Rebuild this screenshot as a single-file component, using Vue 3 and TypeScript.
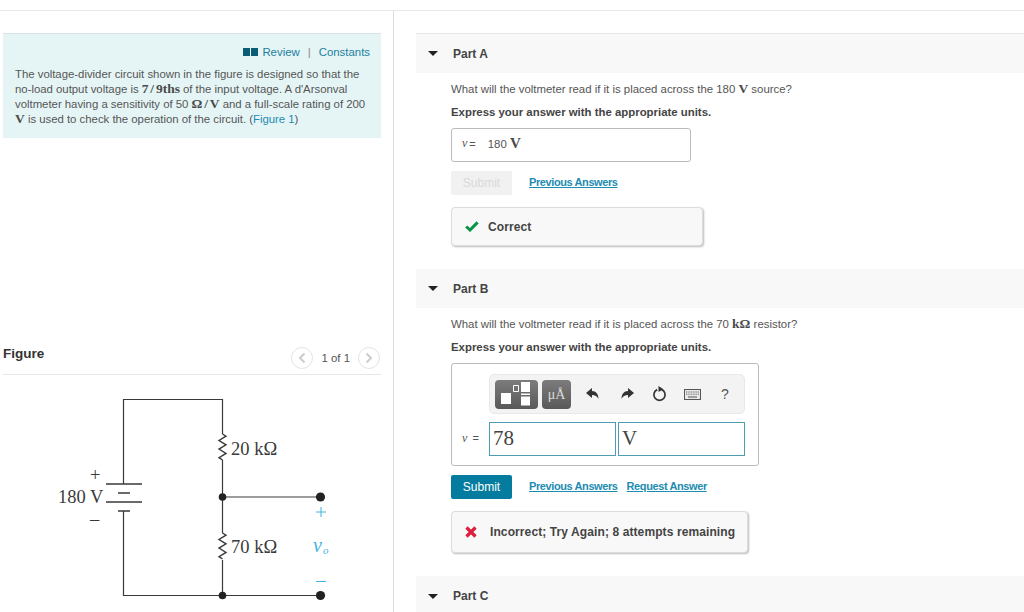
<template>
  <div class="page">
    <aside class="left">
      <section class="intro">
        <div class="intro-links">
          <svg class="book" width="15" height="8" viewBox="0 0 15 8"><path d="M0 0h7v8H0zM8 0h7v8H8z" fill="#0c5c75" /></svg>
          <a>Review</a>
          <span class="sep">|</span>
          <a>Constants</a>
        </div>
        <p>
          The voltage-divider circuit shown in the figure is designed so that the
          no-load output voltage is <span class="math">7 / 9ths</span> of the input voltage. A d'Arsonval
          voltmeter having a sensitivity of 50 <span class="math">Ω / V</span> and a full-scale rating of 200
          <span class="math">V</span> is used to check the operation of the circuit. <span class="fig-link">(<a>Figure 1</a>)</span>
        </p>
      </section>

      <div class="figure-head">
        <strong>Figure</strong>
        <div class="pager">
          <span class="round"><svg width="8" height="12" viewBox="0 0 8 12"><path d="M6.5 1.5 2 6l4.5 4.5" fill="none" stroke="#ccc" stroke-width="2" /></svg></span>
          <span class="count">1 of 1</span>
          <span class="round"><svg width="8" height="12" viewBox="0 0 8 12"><path d="M1.5 1.5 6 6l-4.5 4.5" fill="none" stroke="#ccc" stroke-width="2" /></svg></span>
        </div>
      </div>

      <svg class="circuit" width="381" height="237" viewBox="0 375 381 237">
        <g fill="none" stroke="#3a3a3a" stroke-width="1.2">
          <path d="M123.5 484V399.5H222.5V434" />
          <path :d="resistor(434)" stroke-width="1.4" />
          <path d="M222.5 460V533" />
          <path :d="resistor(533)" stroke-width="1.4" />
          <path d="M222.5 560V595.5H123.5V511" />
          <path d="M222.5 497H320.5M222.5 595.5H320.5" />
          <path d="M106 484H142M118 493H130M106 502H142M118 511H130" stroke-width="1.6" />
        </g>
        <g fill="#222">
          <circle cx="222.5" cy="497" r="3.8" />
          <circle cx="320.5" cy="497" r="4.6" />
          <circle cx="222.5" cy="595.5" r="3.8" />
          <circle cx="320.5" cy="595.5" r="4.6" />
        </g>
        <g class="label">
          <text x="90" y="481">+</text>
          <text x="58" y="503">180 V</text>
          <text x="90" y="525">–</text>
          <text x="231" y="455">20 kΩ</text>
          <text x="231" y="553">70 kΩ</text>
        </g>
        <g class="blue">
          <path d="M316 512H326M321 507V517M316 581.5H326" fill="none" stroke="#3fb4e0" stroke-width="1" />
          <text x="313" y="552" class="v">v</text>
          <text x="323" y="554" class="o">o</text>
        </g>
      </svg>
    </aside>

    <main class="right">
      <section class="part part-a">
        <header class="part-head"><i class="caret"></i>Part A</header>
        <div class="part-body">
          <p class="q">What will the voltmeter read if it is placed across the 180 <span class="math">V</span> source?</p>
          <p class="hint">Express your answer with the appropriate units.</p>
          <div class="answer-done"><span class="var">v</span> =<span class="val">180 <span class="math">V</span></span></div>
          <div class="actions">
            <button class="btn off">Submit</button>
            <a class="link">Previous Answers</a>
          </div>
          <div class="feedback ok">
            <svg width="14" height="11" viewBox="0 0 14 11"><path d="M1.2 5.5 5 9l7.6-7.6" fill="none" stroke="#0a9345" stroke-width="3" /></svg>
            <span>Correct</span>
          </div>
        </div>
      </section>

      <section class="part part-b">
        <header class="part-head"><i class="caret"></i>Part B</header>
        <div class="part-body">
          <p class="q">What will the voltmeter read if it is placed across the 70 <span class="math">kΩ</span> resistor?</p>
          <p class="hint">Express your answer with the appropriate units.</p>
          <div class="editor">
            <div class="toolbar">
              <span class="tool wide">
                <svg width="32" height="24" viewBox="0 0 32 24">
                  <path d="M0 11h10v11H0z" fill="#fff" />
                  <path d="M12.5 3.5h5v6h-5z" fill="none" stroke="#fff" />
                  <path d="M20 0h9v10h-9zM20 11.5h9v1.5h-9zM20 14.5h9v9h-9z" fill="#fff" />
                </svg>
              </span>
              <span class="tool unit">μÅ</span>
              <svg class="ico undo" width="14" height="12" viewBox="0 0 14 12"><path d="M6 0 0 5l6 5V7c3 0 5 1 6.5 4C12.5 6 10 3 6 3z" fill="#333" /></svg>
              <svg class="ico redo" width="14" height="12" viewBox="0 0 14 12"><path d="M8 0l6 5-6 5V7c-3 0-5 1-6.5 4C1.5 6 4 3 8 3z" fill="#333" /></svg>
              <svg class="ico reset" width="15" height="16" viewBox="0 0 15 16"><path d="M9.8 3.6a5.6 5.6 0 1 1-4.6 0" fill="none" stroke="#333" stroke-width="1.7" /><path d="M6.5 0l5 3.3-5 2.7z" fill="#333" /></svg>
              <svg class="ico keys" width="17" height="11" viewBox="0 0 17 11"><rect x=".5" y=".5" width="16" height="10" fill="#e8e8e8" stroke="#555" /><path d="M2 3h13M2 5.2h13" stroke="#666" stroke-dasharray="1 .7" /><path d="M4 8h9" stroke="#555" /></svg>
              <span class="ico help">?</span>
            </div>
            <div class="entry">
              <span class="entry-label"><span class="var">v</span> =</span>
              <div class="field">78</div>
              <div class="field">V</div>
            </div>
          </div>
          <div class="actions">
            <button class="btn on">Submit</button>
            <a class="link">Previous Answers</a>
            <a class="link second">Request Answer</a>
          </div>
          <div class="feedback bad">
            <svg width="12" height="12" viewBox="0 0 12 12"><path d="M1.5 1.5l9 9M10.5 1.5l-9 9" stroke="#dc1f3c" stroke-width="3.2" /></svg>
            <span>Incorrect; Try Again; 8 attempts remaining</span>
          </div>
        </div>
      </section>

      <section class="part part-c">
        <header class="part-head"><i class="caret"></i>Part C</header>
      </section>
    </main>
  </div>
</template>

<script setup lang="ts">
// zigzag of a vertical resistor, 26px tall, starting at y
const resistor = (y: number): string => {
  const pts: string[] = [`M222.5 ${y}`]
  for (let i = 0; i < 6; i++) {
    const x = i % 2 === 0 ? 226 : 219
    pts.push(`L${x} ${y + 2.2 + i * 4.3}`)
  }
  pts.push(`L222.5 ${y + 26}`)
  return pts.join(' ')
}
</script>

<style>
html,
body {
  margin: 0;
  background: #fff;
}
</style>

<style scoped>
.page {
  width: 1024px;
  height: 612px;
  overflow: hidden;
  display: flex;
  box-sizing: border-box;
  padding-top: 10px;
  position: relative;
  font-family: "Liberation Sans", Arial, sans-serif;
  font-size: 11.4px;
  color: #555;
  background: linear-gradient(#e9e9e9, #e9e9e9) 0 10px / 100% 1px no-repeat;
}

.left {
  width: 394px;
  flex: none;
  box-sizing: border-box;
  padding: 23px 12px 0 3px;
  border-right: 1px solid #d9dfe3;
}

.intro {
  height: 105px;
  box-sizing: border-box;
  background: #e5f5f6;
  border-top: 1px solid #d7e3e6;
  padding: 11px 11px 0 12px;
}

.intro-links {
  display: flex;
  justify-content: flex-end;
  align-items: center;
  height: 14px;
  margin-bottom: 8px;
  color: #1c7f9e;
}

.book {
  margin-right: 4px;
}

.sep {
  color: #888;
  margin: 0 8px;
}

.intro p {
  margin: 0;
  line-height: 15px;
  width: 356px;
  letter-spacing: -0.02px;
  color: #555;
}

.math {
  font-family: "Liberation Serif", "Times New Roman", serif;
  font-weight: 700;
  font-size: 13.5px;
  word-spacing: -1.5px;
  line-height: 1;
  color: #4a4a4a;
}

.fig-link a {
  color: #1c8cb0;
}

.figure-head {
  margin-top: 205px;
  height: 32px;
  box-sizing: border-box;
  border-bottom: 1px solid #e4e6e8;
  display: flex;
  justify-content: space-between;
  align-items: flex-start;
}

.figure-head strong {
  font-size: 13.5px;
  color: #333;
  margin-top: 3px;
}

.pager {
  display: flex;
  align-items: center;
  margin-top: 4px;
}

.round {
  width: 20px;
  height: 20px;
  border: 1px solid #e4e4e4;
  border-radius: 50%;
  display: flex;
  align-items: center;
  justify-content: center;
}

.count {
  margin: 0 8px 0 9px;
  font-size: 11.4px;
}

.pager .round:last-child {
  margin-right: 1px;
}

.circuit {
  display: block;
  margin-left: -3px;
}

.label text {
  font-family: "Liberation Serif", "Times New Roman", serif;
  font-size: 18.5px;
  fill: #3a3a3a;
}

.blue text {
  font-family: "Liberation Serif", "Times New Roman", serif;
  font-style: italic;
  fill: #3fb4e0;
}

.blue .v {
  font-size: 20px;
}

.blue .o {
  font-size: 11px;
}

.right {
  flex: 1;
  padding: 23px 0 0 22px;
  min-width: 0;
}

.part-head {
  height: 40px;
  box-sizing: border-box;
  background: #f8f8f8;
  display: flex;
  align-items: center;
  font-size: 12px;
  font-weight: 700;
  color: #444;
}

.part-a .part-head {
  border-top: 1px solid #e8e8e8;
}

.caret {
  width: 0;
  height: 0;
  border-left: 5px solid transparent;
  border-right: 5px solid transparent;
  border-top: 5px solid #222;
  margin: 0 15px 0 12px;
}

.part-body {
  padding-left: 35px;
}

.part-a .part-body {
  height: 196px;
}

.part-b .part-head {
  height: 39px;
}

.part-b .part-body {
  height: 268px;
}

.q {
  margin: 0;
  padding-top: 9px;
  line-height: 15px;
  height: 15px;
  color: #555;
}

.hint {
  margin: 8px 0 8px;
  line-height: 15px;
  font-weight: 700;
  color: #444;
}

.answer-done {
  width: 240px;
  height: 34px;
  box-sizing: border-box;
  border: 1px solid #bbb;
  border-radius: 3px;
  display: flex;
  align-items: center;
  padding: 0 0 3px 10px;
  font-size: 11px;
}

.var {
  font-family: "Liberation Serif", "Times New Roman", serif;
  font-style: italic;
  font-size: 12px;
  margin-right: 2px;
}

.val {
  margin-left: 12px;
  font-size: 11.4px;
}

.answer-done .math {
  font-size: 15px;
}

.actions {
  display: flex;
  align-items: flex-start;
  margin-top: 9px;
}

.btn {
  width: 61px;
  height: 24px;
  border: 0;
  border-radius: 2px;
  font: 12px "Liberation Sans", Arial, sans-serif;
  padding: 0;
}

.btn.off {
  background: #f1f1f1;
  color: #d9d9d9;
}

.btn.on {
  background: #047c9f;
  color: #fff;
}

.link {
  margin: 4px 0 0 17px;
  font-size: 11px;
  font-weight: 700;
  letter-spacing: -0.4px;
  line-height: 14px;
  color: #1c8cb0;
  text-decoration: underline;
}

.link.second {
  margin-left: 9px;
}

.feedback {
  margin-top: 12px;
  box-sizing: border-box;
  background: #f8f8f8;
  border: 1px solid #ddd;
  border-radius: 4px;
  box-shadow: 1px 1px 2px #bbb;
  display: flex;
  align-items: center;
  font-size: 12px;
  font-weight: 700;
  letter-spacing: 0.1px;
  color: #444;
}

.feedback.ok {
  width: 252px;
  height: 39px;
  padding-left: 13px;
  gap: 9px;
}

.feedback.bad {
  width: 297px;
  height: 42px;
  padding-left: 13px;
  gap: 13px;
}

.editor {
  width: 308px;
  height: 103px;
  box-sizing: border-box;
  border: 1px solid #bbb;
  border-radius: 3px;
  padding: 10px 13px 0 37px;
}

.toolbar {
  height: 40px;
  box-sizing: border-box;
  background: #f3f3f3;
  border: 1px solid #e8e8e8;
  border-radius: 5px;
  display: flex;
  align-items: center;
  padding-left: 5px;
}

.tool {
  height: 29px;
  border-radius: 4px;
  background: linear-gradient(#7c7c7c, #595959);
  display: flex;
  align-items: center;
  justify-content: center;
  box-sizing: border-box;
}

.tool.wide {
  width: 43px;
}

.tool.unit {
  width: 29px;
  margin-left: 4px;
  color: #ddd;
  font-family: "Liberation Serif", "Times New Roman", serif;
  font-size: 14px;
  padding-top: 2px;
}

.undo {
  margin-left: 15px;
}

.redo {
  margin-left: 20px;
}

.reset {
  margin-left: 18px;
}

.keys {
  margin-left: 17px;
}

.help {
  margin-left: 20px;
  font-size: 14px;
  color: #555;
}

.entry {
  display: flex;
  height: 34px;
  margin-top: 8px;
  gap: 2px;
  position: relative;
}

.entry-label {
  position: absolute;
  left: -27px;
  top: 9px;
  font-size: 11px;
  white-space: nowrap;
}

.field {
  flex: 1;
  box-sizing: border-box;
  border: 1px solid #4d9db5;
  padding: 0 0 0 3px;
  font-family: "Liberation Serif", "Times New Roman", serif;
  font-size: 21px;
  line-height: 31px;
  color: #444;
}
</style>
